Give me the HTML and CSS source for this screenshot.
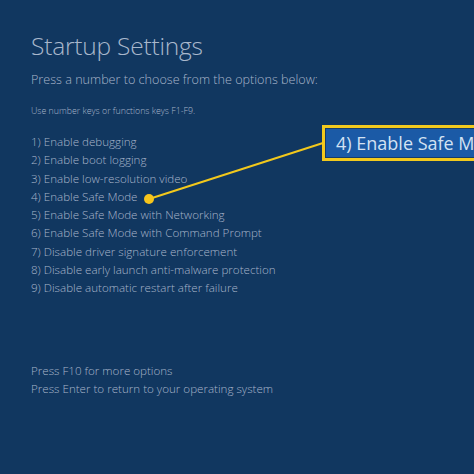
FILE: index.html
```html
<!DOCTYPE html>
<html>
<head>
<meta charset="utf-8">
<link rel="stylesheet" href="styles.css">
</head>
<body>
<main class="screen">
  <h1 class="title">Startup Settings</h1>
  <p class="lead">Press a number to choose from the options below:</p>
  <p class="hint">Use number keys or functions keys F1-F9.</p>
  <ol class="options">
    <li>1) Enable debugging</li>
    <li>2) Enable boot logging</li>
    <li>3) Enable low-resolution video</li>
    <li class="target">4) Enable Safe Mode</li>
    <li>5) Enable Safe Mode with Networking</li>
    <li>6) Enable Safe Mode with Command Prompt</li>
    <li>7) Disable driver signature enforcement</li>
    <li>8) Disable early launch anti-malware protection</li>
    <li>9) Disable automatic restart after failure</li>
  </ol>
  <div class="footer">
    <p>Press F10 for more options</p>
    <p>Press Enter to return to your operating system</p>
  </div>
  <svg class="pointer" width="474" height="474" viewBox="0 0 474 474">
    <line x1="149" y1="199" x2="323" y2="143" stroke="#f2c81c" stroke-width="2"/>
    <circle cx="149" cy="199" r="5" fill="#f7c51c"/>
  </svg>
  <div class="callout"><span>4) Enable Safe Mode</span></div>
</main>
</body>
</html>
```
FILE: styles.css
```css
html, body {
  margin: 0;
  padding: 0;
  background: #113760;
}
.screen {
  position: relative;
  width: 474px;
  height: 474px;
  overflow: hidden;
  box-sizing: border-box;
  padding: 30px 0 0 31px;
  font-family: "Open Sans", "Liberation Sans", sans-serif;
  font-weight: 300;
  color: #a7b5ca;
}
.title {
  margin: 0;
  font-size: 24.5px;
  font-weight: 300;
  line-height: 32px;
  color: #a9b8cc;
  letter-spacing: -0.2px;
}
.lead {
  margin: 9px 0 0;
  font-size: 12.6px;
  line-height: 18px;
}
.hint {
  margin: 15px 0 0;
  font-size: 8.8px;
  line-height: 14px;
}
.options {
  list-style: none;
  margin: 15px 0 0;
  padding: 0;
  font-size: 11.6px;
  line-height: 18.3px;
}
.footer {
  margin-top: 64px;
  font-size: 11.6px;
  line-height: 18.3px;
}
.footer p {
  margin: 0;
}
.pointer {
  position: absolute;
  left: 0;
  top: 0;
  pointer-events: none;
}
.callout {
  position: absolute;
  left: 322px;
  top: 125px;
  width: 200px;
  height: 36px;
  box-sizing: border-box;
  border: 3px solid #f2c91d;
  background: #1b5aa6;
  box-shadow: inset 0 0 0 1px #163c6a;
  padding: 0 0 0 11px;
  display: flex;
  align-items: center;
}
.callout span {
  font-size: 18px;
  font-weight: 400;
  color: #d3e2f3;
  white-space: nowrap;
}
```
